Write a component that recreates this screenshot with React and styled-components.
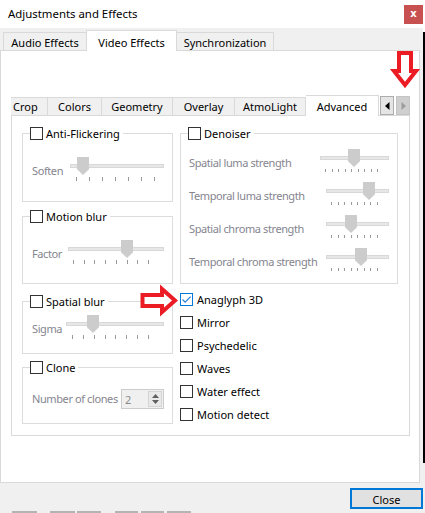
import React from 'react';
import styled, { createGlobalStyle } from 'styled-components';

const Global = createGlobalStyle`
  html, body { margin: 0; padding: 0; background: #f0f0f0; }
  body { font-family: "Noto Sans", "Liberation Sans", sans-serif; font-size: 11px; color: #000; }
  * { box-sizing: border-box; }
`;

const Page = styled.div`
  position: relative;
  width: 425px;
  height: 513px;
  overflow: hidden;
  display: grid;
  grid-template-columns: 423px 2px;
  background: #f0f0f0;
`;

const Dialog = styled.div`
  display: flex;
  flex-direction: column;
`;

const SideEdge = styled.div`
  background: linear-gradient(to bottom, #fff 0 32px, #000 32px 463px, #f0f0f0 463px);
`;

const TitleBar = styled.div`
  height: 28px;
  background: #fff;
  display: flex;
  align-items: center;
  justify-content: space-between;
  padding-left: 8px;
`;

const Title = styled.span`
  font-size: 11.4px;
  line-height: 15px;
  margin-top: -2px;
`;

const CloseX = styled.div`
  width: 19px;
  height: 19px;
  background: #c75050;
  color: #fff;
  font-family: "DejaVu Sans", sans-serif;
  font-weight: bold;
  font-size: 10px;
  line-height: 17px;
  text-align: center;
`;

const TabStrip = styled.div`
  position: relative;
  z-index: 1;
  display: flex;
  align-items: flex-end;
  height: 20px;
  margin-top: ${p => p.$mt || 0}px;
  padding-left: ${p => p.$pl || 0}px;
`;

const OuterTab = styled.div`
  width: ${p => p.$w}px;
  height: ${p => (p.$active ? 21 : 18)}px;
  margin-bottom: ${p => (p.$active ? -1 : 0)}px;
  background: ${p => (p.$active ? '#fff' : '#f0f0f0')};
  border: 1px solid #d9d9d9;
  border-bottom: none;
  border-left-width: ${p => (p.$noLeft ? 0 : 1)}px;
  border-right-width: ${p => (p.$noRight ? 0 : 1)}px;
  display: flex;
  align-items: center;
  justify-content: center;
  padding-top: 2px;
  white-space: nowrap;
`;

const InnerTab = styled.div`
  width: ${p => p.$w}px;
  height: ${p => (p.$active ? 21 : 18)}px;
  margin-bottom: ${p => (p.$active ? -1 : 0)}px;
  background: ${p => (p.$active ? '#fff' : '#f0f0f0')};
  border-top: 1px solid #d9d9d9;
  border-right: 1px solid #d9d9d9;
  display: flex;
  align-items: center;
  justify-content: ${p => (p.$clipped ? 'flex-start' : 'center')};
  padding-left: ${p => (p.$clipped ? 2 : 0)}px;
  padding-top: ${p => (p.$active ? 1 : 0)}px;
  white-space: nowrap;
  overflow: hidden;
`;

const ScrollBtn = styled.div`
  width: 14px;
  height: 19px;
  margin-left: ${p => p.$ml}px;
  border: 1px solid ${p => (p.$disabled ? '#c4c4c4' : '#adadad')};
  background: ${p => (p.$disabled ? '#cfcfcf' : '#e5e5e5')};
  display: flex;
  align-items: center;
  justify-content: center;
`;

const OuterPane = styled.div`
  width: 420px;
  height: 433px;
  background: #fff;
  border: 1px solid #d9d9d9;
  padding: 44px 0 0 10px;
  display: flex;
  flex-direction: column;
`;

const InnerPane = styled.div`
  width: 399px;
  height: 321px;
  background: #fff;
  border: 1px solid #d9d9d9;
  padding: 17px 11px 0 10px;
  display: grid;
  grid-template-columns: 151px 218px;
  column-gap: 7px;
  align-items: start;
`;

const Column = styled.div`
  display: flex;
  flex-direction: column;
`;

const Group = styled.div`
  height: ${p => p.$h}px;
  margin-top: ${p => p.$mt || 0}px;
  border: 1px solid #dcdcdc;
  display: flex;
  flex-direction: column;
`;

const Legend = styled.div`
  align-self: flex-start;
  margin: -8px 0 0 7px;
  padding: 0 3px 0 0;
  height: 15px;
  background: #fff;
  display: flex;
  align-items: center;
  gap: 3px;
  line-height: 15px;
  white-space: nowrap;
`;

const GroupBody = styled.div`
  margin-top: ${p => p.$pad}px;
  padding: 0 8px 0 ${p => p.$pl || 9}px;
  display: flex;
  flex-direction: column;
  gap: ${p => p.$gap || 0}px;
`;

const Row = styled.div`
  display: flex;
  align-items: ${p => (p.$center ? 'center' : 'flex-start')};
  justify-content: space-between;
`;

const Dim = styled.span`
  color: #858590;
  line-height: 20px;
  letter-spacing: -0.4px;
  margin-top: ${p => (p.$center ? 0 : 4)}px;
  white-space: nowrap;
`;

const SliderBox = styled.div`
  position: relative;
  flex: none;
  width: ${p => p.$w}px;
  height: 24px;
  display: flex;
  flex-direction: column;
`;

const Track = styled.div`
  margin-top: 7px;
  height: 4px;
  background: #e7e7e7;
  border: 1px solid #d8d8d8;
`;

const Ticks = styled.div`
  margin: 9px 0 0 ${p => p.$l}px;
  width: ${p => p.$w}px;
  height: ${p => p.$h}px;
  display: flex;
  justify-content: space-between;
`;

const Tick = styled.span`
  width: 1px;
  height: 100%;
  background: #9a9a9a;
`;

const Thumb = styled.div`
  position: absolute;
  top: 0;
  width: 12px;
  height: 18px;
  background: #cccccc;
  clip-path: polygon(0 0, 100% 0, 100% 68%, 50% 100%, 0 68%);
`;

const Box = styled.span`
  flex: none;
  width: 13px;
  height: 13px;
  border: 1px solid ${p => (p.$checked ? '#0078d7' : '#333')};
  background: #fff;
  display: inline-flex;
  align-items: center;
  justify-content: center;
`;

const CheckList = styled.div`
  margin-top: 4px;
  display: flex;
  flex-direction: column;
`;

const CheckRow = styled.div`
  height: 23px;
  display: flex;
  align-items: center;
  gap: 4px;
  white-space: nowrap;
`;

const Spin = styled.div`
  width: 43px;
  height: 20px;
  border: 1px solid #cccccc;
  background: #f0f0f0;
  display: flex;
  align-items: center;
  justify-content: space-between;
  padding: 0 1px 0 3px;
  color: #8a8a8a;
`;

const SpinArrows = styled.div`
  width: 14px;
  height: 16px;
  border: 1px solid #d4d4d4;
  background: #e9e9e9;
  display: flex;
  flex-direction: column;
  align-items: center;
  justify-content: space-evenly;
`;

const Footer = styled.div`
  display: flex;
  justify-content: flex-end;
  padding-top: 5px;
`;

const Button = styled.div`
  width: 73px;
  height: 21px;
  border: 2px solid #0078d7;
  background: #e1e1e1;
  display: flex;
  align-items: center;
  justify-content: center;
  padding-top: 1px;
`;

const Dock = styled.div`
  height: 4px;
  margin-top: 1px;
  display: flex;
  align-items: center;
`;

const DockSeg = styled.span`
  height: 2px;
  width: ${p => p.$w}px;
  margin-left: ${p => p.$ml}px;
  background: #b4b4b4;
`;

const Overlay = styled.svg`
  position: absolute;
  left: 0;
  top: 0;
  pointer-events: none;
`;

function CheckBox({ checked }) {
  return (
    <Box $checked={checked}>
      {checked && (
        <svg width="11" height="11" viewBox="0 0 11 11">
          <path d="M1.5 5.5 L4.2 8.2 L9.6 2.6" fill="none" stroke="#2b7fd8" strokeWidth="1.2" />
        </svg>
      )}
    </Box>
  );
}

function Slider({ w, x, ticks, tl, tw, th = 4 }) {
  return (
    <SliderBox $w={w}>
      <Track />
      <Ticks $l={tl} $w={tw} $h={th}>
        {Array.from({ length: ticks }).map((_, i) => (
          <Tick key={i} />
        ))}
      </Ticks>
      <Thumb style={{ left: x }} />
    </SliderBox>
  );
}

const leftGroups = [
  { title: 'Anti-Flickering', h: 69, mt: 0, pad: 16, label: 'Soften', s: { w: 94, x: 7, ticks: 7, tl: 6, tw: 79 } },
  { title: 'Motion blur', h: 68, mt: 14, pad: 16, label: 'Factor', s: { w: 96, x: 53, ticks: 8, tl: 5, tw: 76 } },
  { title: 'Spatial blur', h: 53, mt: 17, pad: 6, label: 'Sigma', s: { w: 98, x: 21, ticks: 8, tl: 6, tw: 77 } },
];

const denoise = [
  { label: 'Spatial luma strength', s: { w: 69, x: 28, ticks: 9, tl: 5, tw: 53, th: 3 } },
  { label: 'Temporal luma strength', s: { w: 63, x: 37, ticks: 8, tl: 5, tw: 47, th: 3 } },
  { label: 'Spatial chroma strength', s: { w: 63, x: 19, ticks: 8, tl: 5, tw: 47, th: 3 } },
  { label: 'Temporal chroma strength', s: { w: 63, x: 29, ticks: 8, tl: 5, tw: 47, th: 3 } },
];

const checks = [
  { label: 'Anaglyph 3D', checked: true },
  { label: 'Mirror' },
  { label: 'Psychedelic' },
  { label: 'Waves' },
  { label: 'Water effect' },
  { label: 'Motion detect' },
];

const innerTabs = [
  { label: 'Crop', w: 37, clipped: true },
  { label: 'Colors', w: 54 },
  { label: 'Geometry', w: 71 },
  { label: 'Overlay', w: 62 },
  { label: 'AtmoLight', w: 71 },
  { label: 'Advanced', w: 73, active: true },
];

const dockSegs = [
  { ml: 12, w: 25 },
  { ml: 13, w: 25 },
  { ml: 2, w: 24 },
  { ml: 14, w: 23 },
  { ml: 3, w: 23 },
  { ml: 3, w: 24 },
];

export default function App() {
  return (
    <>
      <Global />
      <Page>
        <Dialog>
          <TitleBar>
            <Title>Adjustments and Effects</Title>
            <CloseX>x</CloseX>
          </TitleBar>

          <TabStrip $mt={2} $pl={3}>
            <OuterTab $w={83} $noRight>Audio Effects</OuterTab>
            <OuterTab $w={91} $active>Video Effects</OuterTab>
            <OuterTab $w={97} $noLeft>Synchronization</OuterTab>
          </TabStrip>

          <OuterPane>
            <TabStrip>
              {innerTabs.map(t => (
                <InnerTab key={t.label} $w={t.w} $active={t.active} $clipped={t.clipped}>
                  {t.label}
                </InnerTab>
              ))}
              <ScrollBtn $ml={1}>
                <svg width="5" height="8" viewBox="0 0 5 8"><path d="M4.5 0 L0 4 L4.5 8 Z" fill="#000" /></svg>
              </ScrollBtn>
              <ScrollBtn $ml={2} $disabled>
                <svg width="5" height="8" viewBox="0 0 5 8"><path d="M0.5 0 L5 4 L0.5 8 Z" fill="#9d9d9d" /></svg>
              </ScrollBtn>
            </TabStrip>

            <InnerPane>
              <Column>
                {leftGroups.map(g => (
                  <Group key={g.title} $h={g.h} $mt={g.mt}>
                    <Legend>
                      <CheckBox />
                      <span>{g.title}</span>
                    </Legend>
                    <GroupBody $pad={g.pad}>
                      <Row>
                        <Dim>{g.label}</Dim>
                        <Slider {...g.s} />
                      </Row>
                    </GroupBody>
                  </Group>
                ))}
                <Group $h={57} $mt={13}>
                  <Legend>
                    <CheckBox />
                    <span>Clone</span>
                  </Legend>
                  <GroupBody $pad={14}>
                    <Row $center>
                      <Dim $center>Number of clones</Dim>
                      <Spin>
                        <span>2</span>
                        <SpinArrows>
                          <svg width="7" height="4" viewBox="0 0 7 4"><path d="M0 4 L3.5 0 L7 4 Z" fill="#606060" /></svg>
                          <svg width="7" height="4" viewBox="0 0 7 4"><path d="M0 0 L3.5 4 L7 0 Z" fill="#606060" /></svg>
                        </SpinArrows>
                      </Spin>
                    </Row>
                  </GroupBody>
                </Group>
              </Column>

              <Column>
                <Group $h={151}>
                  <Legend>
                    <CheckBox />
                    <span>Denoiser</span>
                  </Legend>
                  <GroupBody $pad={8} $pl={8} $gap={9}>
                    {denoise.map(r => (
                      <Row key={r.label}>
                        <Dim>{r.label}</Dim>
                        <Slider {...r.s} />
                      </Row>
                    ))}
                  </GroupBody>
                </Group>
                <CheckList>
                  {checks.map(c => (
                    <CheckRow key={c.label}>
                      <CheckBox checked={c.checked} />
                      <span>{c.label}</span>
                    </CheckRow>
                  ))}
                </CheckList>
              </Column>
            </InnerPane>
          </OuterPane>

          <Footer>
            <Button>Close</Button>
          </Footer>
          <Dock>
            {dockSegs.map((d, i) => (
              <DockSeg key={i} $ml={d.ml} $w={d.w} />
            ))}
          </Dock>
        </Dialog>
        <SideEdge />

        <Overlay width="425" height="513" viewBox="0 0 425 513">
          <polygon
            points="399,53 411,53 411,71 416,71 405,85 394,71 399,71"
            fill="#fff"
            stroke="#ec1c24"
            strokeWidth="4"
            strokeLinejoin="miter"
          />
          <polygon
            points="142.5,295 162,295 162,289 175,300.5 162,312 162,306 142.5,306"
            fill="#fff"
            stroke="#ec1c24"
            strokeWidth="4"
            strokeLinejoin="miter"
          />
        </Overlay>
      </Page>
    </>
  );
}
